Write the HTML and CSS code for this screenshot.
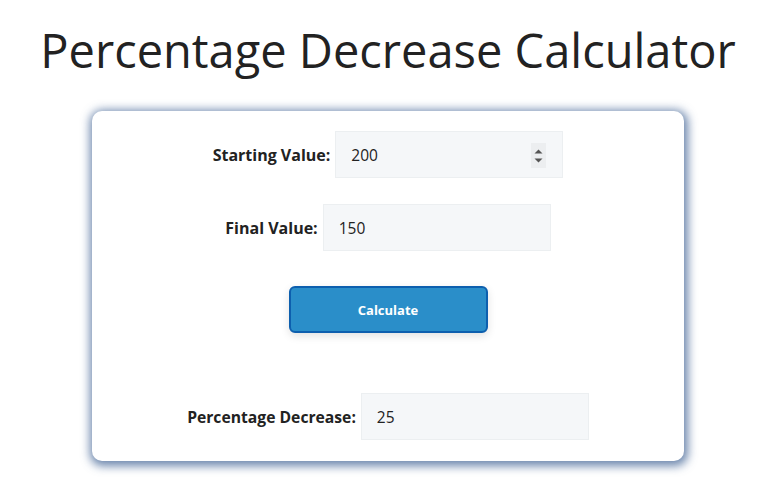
FILE: index.html
```html
<!DOCTYPE html>
<html lang="en">
<head>
    <meta charset="UTF-8">
    <meta name="viewport" content="width=device-width, initial-scale=1.0">
    <title>Percentage Decrease Calculator</title>
    <link rel="stylesheet" href="styles.css">
</head>
<body>
    <div class="page">
        <h1 class="title">Percentage Decrease Calculator</h1>

        <div class="card">
            <div class="row">
                <label for="start">Starting Value:</label>
                <div class="field">
                    <input type="text" id="start" value="200">
                    <span class="spin">
                        <svg width="9" height="16" viewBox="0 0 9 16">
                            <path d="M0.5 5.5 L4.5 1.5 L8.5 5.5 Z" fill="#555"/>
                            <path d="M0.5 10.5 L4.5 14.5 L8.5 10.5 Z" fill="#555"/>
                        </svg>
                    </span>
                </div>
            </div>
            <div class="row">
                <label for="final">Final Value:</label>
                <div class="field">
                    <input type="text" id="final" value="150">
                </div>
            </div>
            <div class="row">
                <button class="calc">Calculate</button>
            </div>
            <div class="row result">
                <label for="pct">Percentage Decrease:</label>
                <div class="field">
                    <input type="text" id="pct" value="25" readonly>
                </div>
            </div>
        </div>
    </div>
</body>
</html>
```

FILE: styles.css
```css
html, body {
    margin: 0;
    height: 100%;
    background: #fff;
    font-family: "Open Sans", "Liberation Sans", sans-serif;
    color: #222;
}

.page {
    width: 776px;
    min-height: 482px;
    padding-bottom: 20px;
    box-sizing: border-box;
}

.title {
    margin: 18px 0 0;
    height: 92px;
    text-align: center;
    font-size: 47px;
    font-weight: 400;
    line-height: 64px;
    color: #222;
}

.card {
    margin: 1px auto 0;
    width: 592px;
    height: 350px;
    box-sizing: border-box;
    padding: 20px 0 21px;
    background: #fff;
    border-radius: 10px;
    box-shadow: 1px 2px 10px 3px rgba(60, 95, 145, 0.75);
    display: flex;
    flex-direction: column;
}

.row {
    display: flex;
    align-items: center;
    justify-content: center;
    gap: 5px;
    margin-bottom: 26px;
}

.row:nth-child(2) {
    margin-bottom: 35px;
}

.row.result {
    margin-top: auto;
    margin-bottom: 0;
}

label {
    font-size: 16px;
    font-weight: 700;
    color: #222;
}

.result label {
    font-size: 15.7px;
}

.field {
    position: relative;
    width: 228px;
    height: 47px;
    box-sizing: border-box;
    background: #f5f7f9;
    border: 1px solid #eceff1;
}

.field input {
    width: 100%;
    height: 100%;
    box-sizing: border-box;
    border: none;
    background: transparent;
    padding: 0 15px;
    font-family: inherit;
    font-size: 15.5px;
    color: #222;
    outline: none;
}

.spin {
    position: absolute;
    right: 16px;
    top: 11px;
    width: 15px;
    height: 25px;
    background: #eceef0;
    display: flex;
    align-items: center;
    justify-content: center;
}

.calc {
    width: 199px;
    height: 47px;
    background: #2a8ec9;
    border: 2px solid #0d5fae;
    border-radius: 6px;
    color: #fff;
    font-family: inherit;
    font-size: 13px;
    font-weight: 700;
    box-shadow: 0 3px 8px rgba(0, 0, 0, 0.12);
    cursor: pointer;
}
```
